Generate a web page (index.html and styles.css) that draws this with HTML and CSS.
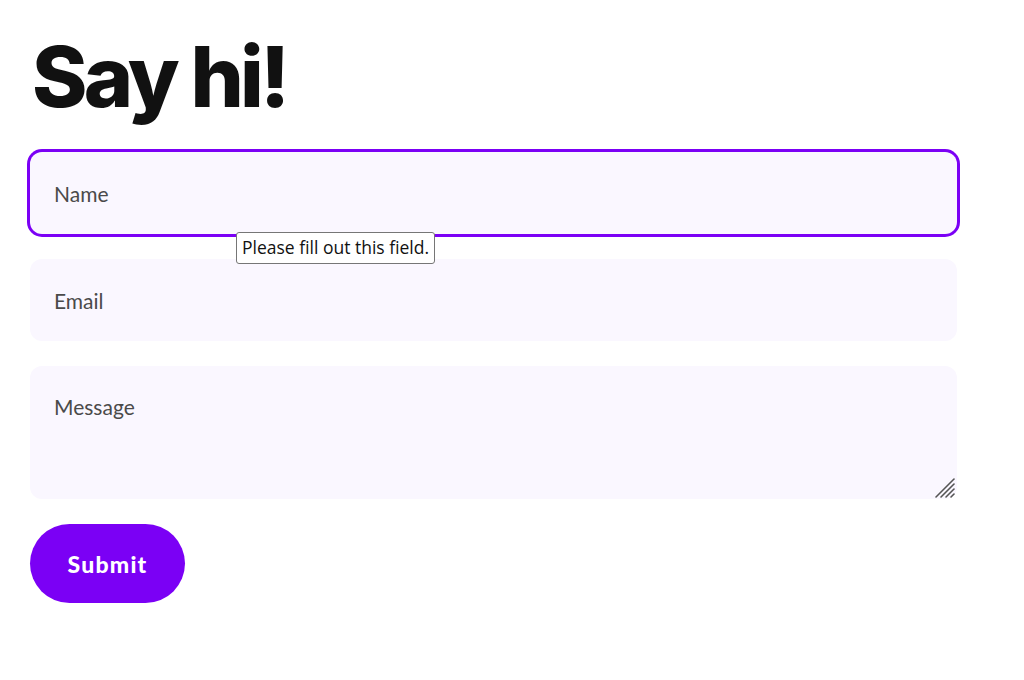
FILE: index.html
```html
<!DOCTYPE html>
<html lang="en">
<head>
<meta charset="utf-8">
<title>Say hi!</title>
<link rel="stylesheet" href="styles.css">
</head>
<body>
<main class="page">
  <h1 class="title">Say hi!</h1>
  <form class="form">
    <div class="field-wrap">
      <div class="field field-focus">Name</div>
      <div class="tooltip">Please fill out this field.</div>
    </div>
    <div class="field">Email</div>
    <div class="field field-area">Message
      <svg class="grip" width="22" height="22" viewBox="0 0 22 22"><g stroke="#555" stroke-width="1.6" stroke-linecap="round"><line x1="2" y1="20" x2="20" y2="2"/><line x1="7" y1="20" x2="20" y2="7"/><line x1="12" y1="20" x2="20" y2="12"/><line x1="17" y1="20" x2="20" y2="17"/></g></svg>
    </div>
    <button class="submit" type="button">Submit</button>
  </form>
</main>
</body>
</html>
```
FILE: styles.css
```css
* { box-sizing: border-box; }
html, body { margin: 0; padding: 0; background: #fff; }
body { font-family: "Lato", "Inter", sans-serif; color: #111; }
.page { padding: 30px 30px; width: 987px; }
.title {
  margin: 0 0 28px 2px;
  font-family: "Inter", sans-serif;
  font-weight: 800;
  font-size: 84px;
  line-height: 94px;
  letter-spacing: -3.8px;
  color: #111;
}
.form { display: flex; flex-direction: column; gap: 25px; align-items: flex-start; }
.field-wrap { position: relative; width: 100%; }
.field {
  width: 100%;
  height: 82px;
  background: #faf7ff;
  border-radius: 12px;
  padding: 0 24px;
  display: flex;
  align-items: center;
  font-size: 21px;
  color: #4a4a4a;
  position: relative;
}
.field-focus {
  box-shadow: 0 0 0 3px #7b00f5;
  height: 82px;
}
.field-area { height: 133px; align-items: flex-start; padding-top: 28px; }
.grip { position: absolute; right: 1px; bottom: 0; width: 22px; height: 22px; }
.tooltip {
  position: absolute;
  left: 206px;
  top: 80px;
  background: #fff;
  border: 1px solid #767676;
  border-radius: 3px;
  padding: 3px 5px 4px 5px;
  font-family: "Open Sans", "Noto Sans", sans-serif;
  font-size: 17.5px;
  line-height: 23px;
  letter-spacing: 0;
  color: #111;
  z-index: 2;
  white-space: nowrap;
}
.submit {
  border: 0;
  background: #7b00f5;
  color: #fff;
  font-family: "Lato", sans-serif;
  font-weight: 900;
  font-size: 23px;
  width: 155px;
  height: 79px;
  border-radius: 40px;
  letter-spacing: 1.2px;
}
```
